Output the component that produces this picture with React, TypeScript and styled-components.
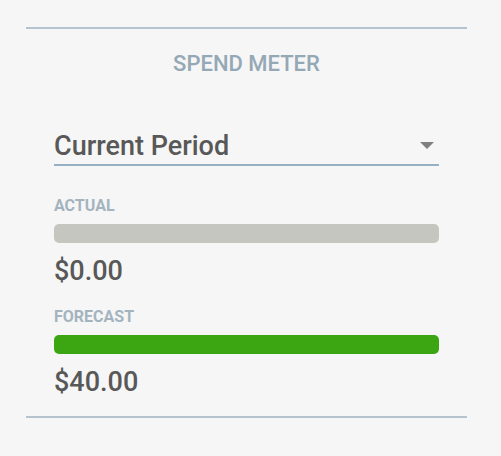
import { useState } from "react";
import styled, { createGlobalStyle } from "styled-components";

const GlobalStyle = createGlobalStyle`
  * {
    box-sizing: border-box;
  }
  body {
    margin: 0;
    background-color: #f6f6f6;
    font-family: Roboto, Arial, sans-serif;
  }
`;

const Page = styled.main`
  padding: 27px 34px 0 26px;
`;

const Panel = styled.section`
  display: flex;
  flex-direction: column;
  padding: 20px 28px 18px;
  border-top: 2px solid #b5c3ce;
  border-bottom: 2px solid #b5c3ce;
`;

const Title = styled.h1`
  margin: 0 0 47px;
  color: #94a8b5;
  font-size: 22px;
  line-height: 30px;
  font-weight: 500;
  text-align: center;
  text-transform: uppercase;
`;

const SelectField = styled.div`
  display: grid;
  align-items: center;
  margin-bottom: 31px;
  border-bottom: 2px solid #96b0c4;
`;

const StyledSelect = styled.select`
  grid-area: 1 / 1;
  width: 100%;
  height: 38px;
  padding: 2px 32px 0 0;
  appearance: none;
  border: 0;
  background: transparent;
  color: #585858;
  font-family: inherit;
  font-size: 27px;
  font-weight: 500;
  cursor: pointer;
`;

const Arrow = styled.svg`
  grid-area: 1 / 1;
  justify-self: end;
  margin-right: 5px;
  pointer-events: none;
`;

const Meters = styled.div`
  display: flex;
  flex-direction: column;
  row-gap: 21px;
`;

const MeterGroup = styled.div`
  display: flex;
  flex-direction: column;
`;

const MeterLabel = styled.span`
  color: #a3b4bf;
  font-size: 16px;
  line-height: 18px;
  font-weight: 700;
  text-transform: uppercase;
`;

const Bar = styled.div<{ color: string }>`
  height: 19px;
  margin: 9px 0 12px;
  border-radius: 5px;
  background-color: ${(props) => props.color};
`;

const Amount = styled.span`
  color: #585858;
  font-size: 27px;
  line-height: 32px;
  font-weight: 500;
`;

const Meter = (props: { label: string; amount: number; color: string }) => {
  return (
    <MeterGroup>
      <MeterLabel>{props.label}</MeterLabel>
      <Bar color={props.color} />
      <Amount>${props.amount.toFixed(2)}</Amount>
    </MeterGroup>
  );
};

export default function App() {
  const [period, setPeriod] = useState("current");

  return (
    <>
      <GlobalStyle />
      <Page>
        <Panel>
          <Title>Spend Meter</Title>
          <SelectField>
            <StyledSelect
              aria-label="Period"
              value={period}
              onChange={(e) => setPeriod(e.target.value)}
            >
              <option value="current">Current Period</option>
            </StyledSelect>
            <Arrow width="14" height="7" viewBox="0 0 14 7" aria-hidden="true">
              <path d="M0 0h14L7 7z" fill="#7f7f7f" />
            </Arrow>
          </SelectField>
          <Meters>
            <Meter label="Actual" amount={0} color="#c6c6c0" />
            <Meter label="Forecast" amount={40} color="#3ca512" />
          </Meters>
        </Panel>
      </Page>
    </>
  );
}
